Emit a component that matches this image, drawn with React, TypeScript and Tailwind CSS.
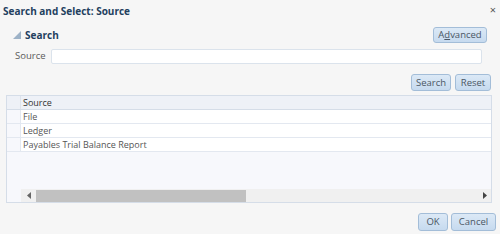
import React from 'react';

const btn =
    'h-full rounded-[3px] border border-[#a3bdd8] bg-gradient-to-b from-[#dce9f6] to-[#c6daef] text-[#4a5664] leading-none flex items-center justify-center text-[9.5px]';

const rows = ['File', 'Ledger', 'Payables Trial Balance Report'];

export default function App() {
    return (
        <div
            className="w-[500px] h-[234px] bg-[#f6f6f6] flex flex-col overflow-hidden text-[9px]"
            style={{ fontFamily: '"Open Sans", "Liberation Sans", sans-serif' }}
        >
            {/* title */}
            <div className="h-[22px] flex items-center justify-between pl-[3px] pr-[4px]">
                <span className="font-bold text-[10px] text-[#23405e]">Search and Select: Source</span>
                <span className="text-[#555] text-[11px] leading-none -mt-[3px]">×</span>
            </div>

            {/* search header */}
            <div className="mt-[5px] h-[16px] flex items-center justify-between pl-[13px] pr-[13px]">
                <div className="flex items-center gap-[4px]">
                    <svg width="8" height="8" viewBox="0 0 8 8">
                        <polygon points="8,0 8,8 0,8" fill="#9db2c7" />
                    </svg>
                    <span className="font-bold text-[10px] text-[#23405e]">Search</span>
                </div>
                <button className={`${btn} w-[54px]`}>
                    A<span className="underline">d</span>vanced
                </button>
            </div>

            {/* source field */}
            <div className="mt-[6px] h-[15px] flex items-center pl-[15px] pr-[18px]">
                <span className="w-[36px] text-[#5a5a5a] text-[9.5px]">Source</span>
                <div className="flex-1 h-full bg-white border border-[#dbe3ec] rounded-[2px]" />
            </div>

            {/* search / reset */}
            <div className="mt-[10px] h-[17px] flex justify-end gap-[4px] pr-[9px]">
                <button className={`${btn} w-[40px]`}>Search</button>
                <button className={`${btn} w-[36px]`}>Reset</button>
            </div>

            {/* table */}
            <div className="mt-[4px] ml-[6px] w-[486px] h-[108px] border border-[#d5dde8] bg-[#f7f8fc] flex flex-col">
                <div className="h-[14px] flex bg-[#eef1f7] border-b border-[#d5dde8]">
                    <div className="w-[14px] border-r border-[#dde3ec]" />
                    <div className="flex-1 pl-[2px] flex items-center text-[#333] text-[9px]">Source</div>
                </div>
                {rows.map((r) => (
                    <div key={r} className="h-[14px] flex bg-white border-b border-[#e3e8f0]">
                        <div className="w-[14px] bg-[#f7f8fc] border-r border-[#e3e8f0]" />
                        <div className="flex-1 pl-[2px] flex items-center text-[#555] text-[9px]">{r}</div>
                    </div>
                ))}
                <div className="flex-1" />
                <div className="h-[13px] ml-[14px] flex items-center bg-[#f0f0f0]">
                    <div className="w-[15px] flex items-center justify-center">
                        <svg width="4" height="7" viewBox="0 0 4 7">
                            <polygon points="4,0 4,7 0,3.5" fill="#666" />
                        </svg>
                    </div>
                    <div className="w-[210px] h-[12px] bg-[#c1c1c1]" />
                    <div className="flex-1" />
                    <div className="w-[12px] flex items-center justify-center">
                        <svg width="4" height="7" viewBox="0 0 4 7">
                            <polygon points="0,0 0,7 4,3.5" fill="#444" />
                        </svg>
                    </div>
                </div>
            </div>

            {/* footer */}
            <div className="mt-[10px] h-[18px] flex justify-end gap-[3px] pr-[4px]">
                <button className={`${btn} w-[30px]`}>OK</button>
                <button className={`${btn} w-[45px]`}>Cancel</button>
            </div>
        </div>
    );
}
